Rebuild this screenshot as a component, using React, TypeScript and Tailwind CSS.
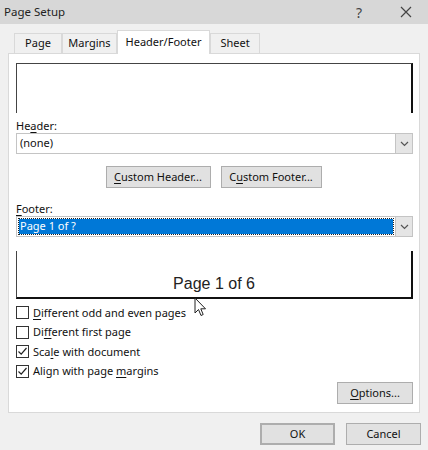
import React from "react";

const font = { fontFamily: '"Noto Sans", "Open Sans", sans-serif' };

function Key({ children }: { children: React.ReactNode }) {
  return <span className="underline underline-offset-2">{children}</span>;
}

function Chevron() {
  return (
    <svg width="9" height="6" viewBox="0 0 9 6">
      <path d="M1 1 L4.5 4.5 L8 1" fill="none" stroke="#555" strokeWidth="1.2" />
    </svg>
  );
}

function Select({ value, selected }: { value: string; selected?: boolean }) {
  return (
    <div className="flex h-[21px] border border-[#c4c4c4] bg-white">
      <div className="flex flex-1 items-center px-[2px]">
        {selected ? (
          <div className="flex h-[15px] w-full items-center bg-[#0078d7] px-[1px] text-white outline outline-1 outline-dotted outline-[#222]">
            {value}
          </div>
        ) : (
          <span className="pl-[1px] text-[#111]">{value}</span>
        )}
      </div>
      <div className="flex w-[17px] items-center justify-center border-l border-[#c4c4c4] bg-[#e5e5e5]">
        <Chevron />
      </div>
    </div>
  );
}

function Button({
  children,
  className = "",
}: {
  children: React.ReactNode;
  className?: string;
}) {
  return (
    <div
      className={`flex h-[22px] items-center justify-center border border-[#adadad] bg-[#e1e1e1] text-[#111] ${className}`}
    >
      {children}
    </div>
  );
}

function Checkbox({
  checked,
  children,
}: {
  checked?: boolean;
  children: React.ReactNode;
}) {
  return (
    <div className="flex h-[19.5px] items-center gap-[4px]">
      <div className="flex h-[13px] w-[13px] items-center justify-center border border-[#333] bg-white">
        {checked && (
          <svg width="11" height="11" viewBox="0 0 11 11">
            <path d="M1.5 5.5 L4.2 8.2 L9.5 2" fill="none" stroke="#222" strokeWidth="1.2" />
          </svg>
        )}
      </div>
      <span className="text-[#111]">{children}</span>
    </div>
  );
}

function Tab({
  label,
  width,
  active,
}: {
  label: string;
  width: string;
  active?: boolean;
}) {
  if (active) {
    return (
      <div
        className={`relative z-10 -mb-px flex h-[24px] items-center justify-center border border-b-0 border-[#d9d9d9] bg-white ${width}`}
      >
        {label}
      </div>
    );
  }
  return (
    <div
      className={`flex h-[20px] items-center justify-center border border-b-0 border-[#d9d9d9] bg-[#f0f0f0] ${width}`}
    >
      {label}
    </div>
  );
}

function Cursor() {
  return (
    <svg
      className="absolute left-[194px] top-[297px]"
      width="14"
      height="21"
      viewBox="0 0 14 21"
    >
      <path
        d="M1 1 L1 16 L4.5 12.5 L7 18.5 L9.2 17.5 L6.8 11.8 L11.5 11.8 Z"
        fill="white"
        stroke="#222"
        strokeWidth="1"
        strokeLinejoin="round"
      />
    </svg>
  );
}

export default function App() {
  return (
    <div
      className="relative h-[450px] w-[428px] overflow-hidden bg-[#f0f0f0] text-[11px] text-[#111]"
      style={font}
    >
      {/* title bar */}
      <div className="flex h-[24px] items-center bg-[#d7d7d7] pl-[4px] pr-[16px]">
        <span className="flex-1 text-[11.5px] text-[#222]">Page Setup</span>
        <span className="mr-[38px] text-[14px] text-[#444]">?</span>
        <svg width="12" height="12" viewBox="0 0 12 12">
          <path d="M1 1 L11 11 M11 1 L1 11" stroke="#444" strokeWidth="1.2" />
        </svg>
      </div>

      {/* tabs */}
      <div className="mt-[6px] flex h-[23px] items-end pl-[14px]">
        <Tab label="Page" width="w-[48px]" />
        <Tab label="Margins" width="w-[55px]" />
        <Tab label="Header/Footer" width="w-[93px]" active />
        <Tab label="Sheet" width="w-[50px]" />
      </div>

      {/* panel */}
      <div className="mx-[8px] flex h-[360px] w-[412px] flex-col border border-[#d9d9d9] bg-white pl-[7px] pr-[6px]">
        <div className="mt-[9px] h-[50px] border-l border-r-2 border-t border-[#444] border-r-[#111]" />

        <div className="mt-[5px] h-[15px] leading-[15px]">
          He<Key>a</Key>der:
        </div>
        <Select value="(none)" />

        <div className="mt-[12px] flex justify-center gap-[10px] pr-[2px]">
          <Button className="w-[105px]">
            <span>
              <Key>C</Key>ustom Header...
            </span>
          </Button>
          <Button className="w-[101px]">
            <span>
              C<Key>u</Key>stom Footer...
            </span>
          </Button>
        </div>

        <div className="mt-[13px] h-[15px] leading-[15px]">
          <Key>F</Key>ooter:
        </div>
        <Select value="Page 1 of ?" selected />

        <div
          className="mt-[14px] flex h-[48px] items-end justify-center border-b-2 border-l border-r-2 border-[#444] border-b-[#111] border-r-[#111] pb-[1px] text-[16px] text-[#222]"
          style={{ fontFamily: '"Liberation Sans", Arial, sans-serif' }}
        >
          Page 1 of 6
        </div>

        <div className="mt-[4px] flex flex-col">
          <Checkbox>
            <Key>D</Key>ifferent odd and even pages
          </Checkbox>
          <Checkbox>
            Di<Key>f</Key>ferent first page
          </Checkbox>
          <Checkbox checked>
            Sca<Key>l</Key>e with document
          </Checkbox>
          <Checkbox checked>
            Align with page <Key>m</Key>argins
          </Checkbox>
        </div>

        <div className="mt-[1px] flex justify-end">
          <Button className="w-[76px]">
            <span>
              <Key>O</Key>ptions...
            </span>
          </Button>
        </div>
      </div>

      {/* dialog buttons */}
      <div className="mt-[10px] flex justify-end gap-[11px] pr-[7px]">
        <Button className="w-[75px] border-2 border-[#0078d7]">OK</Button>
        <Button className="w-[75px]">Cancel</Button>
      </div>

      <Cursor />
    </div>
  );
}
